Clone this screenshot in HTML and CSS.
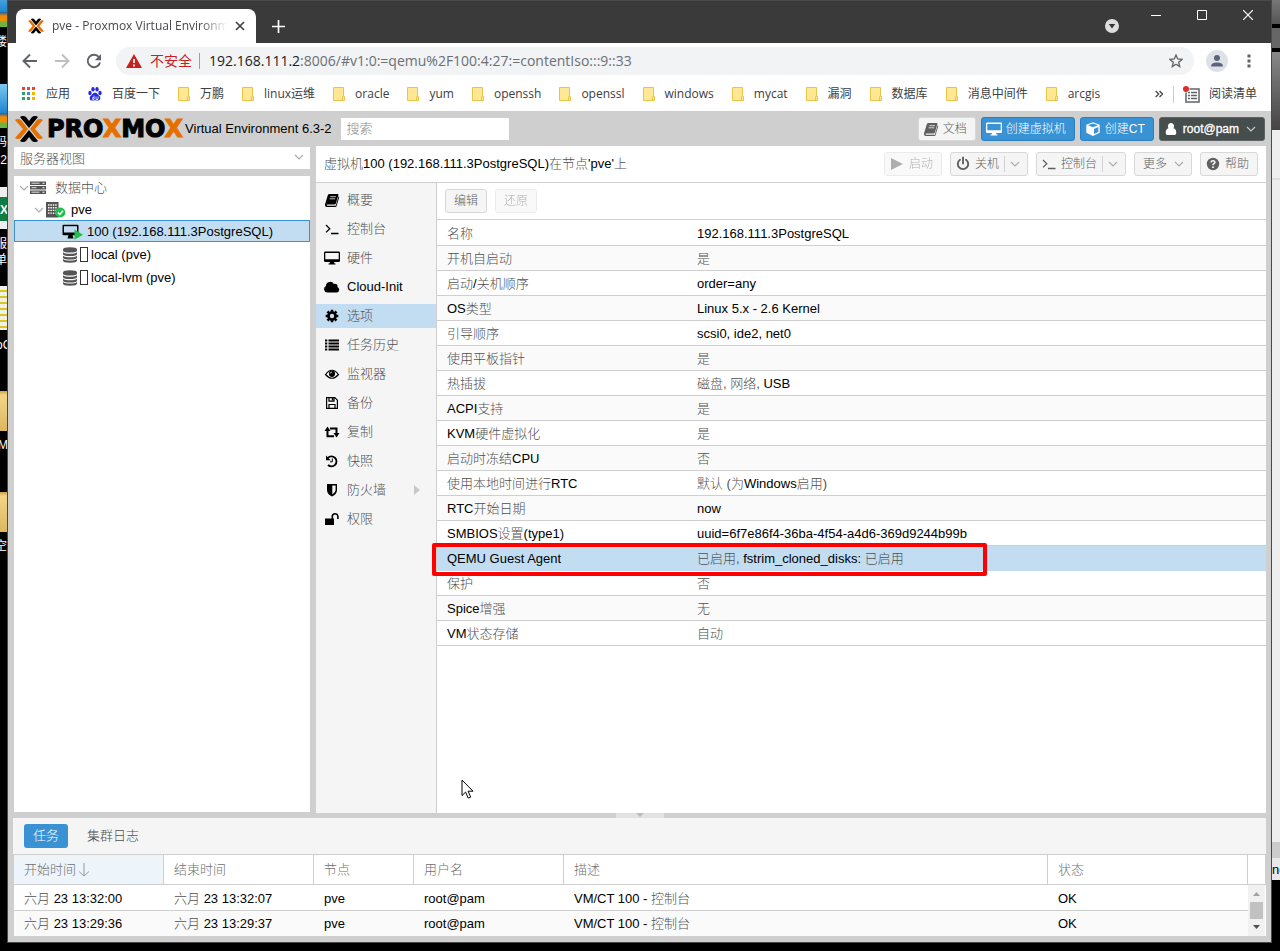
FILE: index.html
```html
<!DOCTYPE html>
<html lang="zh-CN">
<head>
  <meta charset="UTF-8" />
  <meta name="viewport" content="width=device-width, initial-scale=1.0" />
  <title>pve - Proxmox Virtual Environment</title>
  <link rel="stylesheet" href="styles.css">
</head>
<body>
  <!-- icon sprite -->
  <svg class="sprite" aria-hidden="true">
    <symbol id="i-logo" viewBox="0 0 28 26">
      <path fill="#000" d="M5 1Q6 0 8 0Q10 0 11 1L14 5L17 1Q18 0 20 0Q22 0 23 1L14 12ZM5 25Q6 26 8 26Q10 26 11 25L14 21L17 25Q18 26 20 26Q22 26 23 25L14 14Z"/>
      <path fill="#e57000" d="M0 4Q1 3 3 3Q5 3 6 4L13 13L6 22Q5 23 3 23Q1 23 0 22L8 13ZM28 4Q27 3 25 3Q23 3 22 4L15 13L22 22Q23 23 25 23Q27 23 28 22L20 13Z"/>
    </symbol>
    <symbol id="i-folder" viewBox="0 0 12 14"><path d="M.5 .5h10v9h1v4H.5z" fill="#ffe793" stroke="#e8c54a"/><path d="M9.500 9.500v4" stroke="#e8c54a"/></symbol>
    <symbol id="i-book" viewBox="0 0 16 16"><path d="M5.500 2h8.200q1 0 .7 1l-2.500 8.500q-.3 1-1.400 1H3.300q-.9 0-.7.6.1.700 1 .7h8.200l2.800-9.500q.8.500.500 1.400l-2.500 8.400q-.3 1-1.300 1H3q-1.500 0-1.900-1.300-.3-1 .100-2L3.800 3.300Q4.200 2 5.500 2z" fill="currentColor"/><path d="M6.300 4.700h5.600M5.600 6.800h5.600" stroke="#f5f5f5" stroke-width=".8"/></symbol>
    <symbol id="i-terminal" viewBox="0 0 16 16"><path d="M2 4l3.800 3.700L2 11.400M7 12.500h7.500" fill="none" stroke="currentColor" stroke-width="1.300"/></symbol>
    <symbol id="i-desktop" viewBox="0 0 16 16"><path fill="currentColor" fill-rule="evenodd" d="M1.200 1.500h13.600q1.200 0 1.200 1.200v8.100q0 1.200-1.200 1.200H10l.5 1.500h1v1h-7v-1h1L6 12H1.200Q0 12 0 10.800V2.700Q0 1.500 1.200 1.500zM1.300 3v6.300h13.400V3z"/></symbol>
    <symbol id="i-cloud" viewBox="0 0 16 16"><path fill="currentColor" d="M3.500 13.500A3.400 3.400 0 0 1 1.900 7.100 4.300 4.300 0 0 1 9.900 5a2.500 2.500 0 0 1 3.500 3 2.900 2.900 0 0 1-.4 5.500z"/></symbol>
    <symbol id="i-gear" viewBox="0 0 16 16"><circle cx="8" cy="8" r="3.500" fill="none" stroke="currentColor" stroke-width="2.600"/><path d="M8 1.700v2.500M8 11.800v2.500M1.700 8h2.500M11.800 8h2.500M3.500 3.500l1.700 1.700M10.800 10.800l1.700 1.700M3.500 12.500l1.700-1.700M10.800 5.200l1.700-1.700" stroke="currentColor" stroke-width="2.500"/></symbol>
    <symbol id="i-list" viewBox="0 0 16 16"><path d="M1 3.500h2.300M4.500 3.500H15M1 6.500h2.300M4.500 6.500H15M1 9.500h2.300M4.500 9.500H15M1 12.500h2.300M4.500 12.500H15" stroke="currentColor" stroke-width="1.900"/></symbol>
    <symbol id="i-eye" viewBox="0 0 16 16"><path d="M1.500 8.500Q8 0 14.500 8.500 8 16 1.500 8.500z" fill="none" stroke="currentColor" stroke-width="1.200"/><circle cx="8" cy="7.800" r="3.100" fill="currentColor"/><path d="M6.200 7.600Q6.400 6 8 6" stroke="#f5f5f5" fill="none" stroke-width=".8"/></symbol>
    <symbol id="i-save" viewBox="0 0 16 16"><path d="M2.600 2.600h8.200L13.400 5.200v8.200H2.600zM5 2.600v3.600h5V2.600M5 13.400V9.500h6v3.900" fill="none" stroke="currentColor" stroke-width="1.200"/><path d="M7.800 3h1.500v2.500H7.800z" fill="currentColor"/></symbol>
    <symbol id="i-retweet" viewBox="0 0 16 16"><path d="M3.500 6v6.200H10M6 4.500h6.500V10" fill="none" stroke="currentColor" stroke-width="2"/><path d="M3.500 2.500L.5 7h6zM12.500 13.500l3-4.500h-6z" fill="currentColor"/></symbol>
    <symbol id="i-history" viewBox="0 0 16 16"><path d="M3.800 5A5 5 0 1 1 4 12" fill="none" stroke="currentColor" stroke-width="1.800"/><path d="M2 2.500v4.700h4.700z" fill="currentColor"/><path d="M8.300 5.500v3.300H6" fill="none" stroke="currentColor"/></symbol>
    <symbol id="i-shield" viewBox="0 0 16 16"><path d="M3 2h10v6q0 4-5 6.500Q3 12 3 8z" fill="currentColor"/><path d="M8.300 3.500h3.300V8q0 2.500-3.300 4.500z" fill="#f5f5f5"/></symbol>
    <symbol id="i-unlock" viewBox="0 0 16 16"><path d="M1 7.500h9V14H1z" fill="currentColor"/><path d="M8.300 8V5.500a2.800 2.800 0 0 1 5.600 0V8" fill="none" stroke="currentColor" stroke-width="1.600"/></symbol>
    <symbol id="i-play" viewBox="0 0 16 16"><path d="M2 2l12 6L2 14z" fill="currentColor"/></symbol>
    <symbol id="i-power" viewBox="0 0 16 16"><path d="M5 3.700a5.200 5.200 0 1 0 6 0" fill="none" stroke="currentColor" stroke-width="1.900" stroke-linecap="round"/><path d="M8 1.500v6" stroke="currentColor" stroke-width="1.900" stroke-linecap="round"/></symbol>
    <symbol id="i-help" viewBox="0 0 16 16"><circle cx="8" cy="8" r="6.200" fill="currentColor"/><path d="M6 6.300Q6.200 4.700 8 4.700t1.900 1.500q0 .9-1 1.400T8 9.300" fill="none" stroke="#f5f5f5" stroke-width="1.600"/><path d="M7.100 10.500h1.800v1.600H7.100z" fill="#f5f5f5"/></symbol>
    <symbol id="i-cube" viewBox="0 0 16 16"><path d="M8 1.300l6.700 2.500v8L8 15l-6.700-3.200v-8z" fill="currentColor"/><path d="M3 4.300L8 2.500l5 1.800-5 2zM9 8l4.300-1.900v4.800L9 13z" fill="#3892d4"/></symbol>
    <symbol id="i-user" viewBox="0 0 16 16"><path d="M8 2a3 3.300 0 0 1 2.500 5.300q2.800.7 2.800 4.700 0 2-1.800 2h-7q-1.800 0-1.800-2 0-4 2.800-4.700A3 3.300 0 0 1 8 2z" fill="currentColor"/></symbol>
    <symbol id="i-chevron" viewBox="0 0 10 10"><path d="M1 3l4 4 4-4" fill="none" stroke="currentColor" stroke-width="1.100"/></symbol>
    <symbol id="i-server" viewBox="0 0 16 14"><path d="M0 .5h16v3.500H0zM0 5h16v3.500H0zM0 9.500h16V13H0z" fill="#555"/><path d="M1.500 2.200h8M1.500 6.700h5M1.500 11.200h8" stroke="#ddd"/><path d="M12.500 1.700h2v1h-2zM12.500 6.200h2v1h-2zM12.500 10.700h2v1h-2z" fill="#fff"/></symbol>
    <symbol id="i-node" viewBox="0 0 20 16"><path d="M0 0h12.500v15.500H0z" fill="#555"/><path d="M2 3h9M2 5.700h9M2 8.400h9M2 11.100h9" stroke="#fff" stroke-width="1.400" stroke-dasharray="1.500 .9"/><circle cx="14.300" cy="10.500" r="5" fill="#21bf4b"/><path d="M11.800 10.500l2 2 3.200-3.700" fill="none" stroke="#fff" stroke-width="1.500"/></symbol>
    <symbol id="i-vm" viewBox="0 0 22 16"><path d="M1.500 .8h14q1 0 1 1v8.500q0 1-1 1h-14q-1 0-1-1V1.800q0-1 1-1z" fill="#000"/><path d="M2 2.200h13v6.300H2z" fill="#c2ddf2"/><path d="M6.500 11h4l1 3.500h-6z" fill="#000"/><path d="M12.500 5.500L21 10.700l-8.500 5z" fill="#21bf4b"/></symbol>
    <symbol id="i-db" viewBox="0 0 14 16"><path d="M0 2.500Q0 .3 7 .3t7 2.200v.9q0 2.100-7 2.100T0 3.400zM0 5.200Q2 6.700 7 6.700t7-1.500v1.800q0 2-7 2T0 7zM0 8.700q2 1.500 7 1.500t7-1.500v1.800q0 2-7 2t-7-2zM0 12.100q2 1.500 7 1.500t7-1.500v1.500q0 2.200-7 2.200t-7-2.200z" fill="#555"/></symbol>
  </svg>

  <!-- desktop peeking out behind the window -->
  <div class="desktop-left" aria-hidden="true">
    <div class="app-icon first"></div>
    <span class="d-text t1">楼</span>
    <div class="app-icon second"></div>
    <span class="d-text t2">码</span>
    <span class="d-text t3">-2</span>
    <div class="excel">X</div>
    <span class="d-text t4">服</span>
    <span class="d-text t5">单</span>
    <div class="doc"></div>
    <span class="d-text t6">oC</span>
    <div class="dir d1"></div>
    <span class="d-text t7">M</span>
    <div class="dir d2"></div>
    <span class="d-text t8">空</span>
  </div>
  <div class="desktop-right" aria-hidden="true">
    <div class="back-window"><span>no</span></div>
  </div>

  <div class="window">
    <div class="tabbar">
      <div class="tab">
        <svg class="favicon"><use href="#i-logo"/></svg>
        <span class="tab-title">pve - Proxmox Virtual Environment</span>
        <button class="plain" aria-label="关闭标签页"><svg width="10" height="10"><path d="M1 1l8 8M9 1l-8 8" stroke="#444" stroke-width="1.700"/></svg></button>
      </div>
      <button class="plain new-tab" aria-label="新标签页"><svg width="13" height="13"><path d="M6.500 0v13M0 6.500h13" stroke="#fff" stroke-width="1.700"/></svg></button>
      <button class="plain tab-search" aria-label="搜索标签页"><svg width="14" height="14"><circle cx="7" cy="7" r="7" fill="#ddd"/><path d="M3.800 5h6.400L7 9.500z" fill="#333"/></svg></button>
      <div class="controls">
        <button class="plain" aria-label="最小化"><svg width="10" height="10"><path d="M0 5.500h10" stroke="#fff"/></svg></button>
        <button class="plain" aria-label="最大化"><svg width="10" height="10"><path d="M.5 .5h9v9h-9z" stroke="#fff" fill="none"/></svg></button>
        <button class="plain" aria-label="关闭"><svg width="10" height="10"><path d="M0 0l10 10M10 0L0 10" stroke="#fff" stroke-width="1.200"/></svg></button>
      </div>
    </div>

    <div class="toolbar">
      <button class="plain" aria-label="后退"><svg width="16" height="16"><path d="M15 8H2M8 1.500L1.500 8 8 14.500" fill="none" stroke="#5f6368" stroke-width="1.900"/></svg></button>
      <button class="plain" aria-label="前进"><svg width="16" height="16"><path d="M1 8h13M8 1.500L14.500 8 8 14.500" fill="none" stroke="#bcbec1" stroke-width="1.900"/></svg></button>
      <button class="plain" aria-label="刷新"><svg width="16" height="16"><path d="M13 4.300A6.200 6.200 0 1 0 14 9.500" fill="none" stroke="#5f6368" stroke-width="1.900"/><path d="M15 1v6.200H8.800z" fill="#5f6368"/></svg></button>
      <div class="address">
        <svg width="16" height="14"><path d="M8 0l8 14H0z" fill="#c5221f"/><path d="M8 5v4M8 10.500v2" stroke="#fff" stroke-width="1.700"/></svg>
        <span class="insecure">不安全</span>
        <span class="url"><b>192.168.111.2</b>:8006/#v1:0:=qemu%2F100:4:27:=contentIso:::9::33</span>
        <button class="plain" aria-label="收藏"><svg width="14" height="14"><path d="M7 1l1.700 4 4.300.4-3.300 2.800 1 4.300L7 10.200l-3.700 2.300 1-4.300L1 5.400 5.300 5z" fill="none" stroke="#5f6368" stroke-width="1.300"/></svg></button>
      </div>
      <button class="plain profile" aria-label="用户"><svg width="22" height="22"><circle cx="11" cy="11" r="11" fill="#dee1e6"/><circle cx="11" cy="8" r="3" fill="#5a6478"/><path d="M5 16.500q0-4 6-4t6 4z" fill="#5a6478"/></svg></button>
      <button class="plain menu" aria-label="菜单"><svg width="4" height="14"><path d="M.5 .5h3v3h-3zM.5 5.500h3v3h-3zM.5 10.500h3v3h-3z" fill="#5f6368"/></svg></button>
    </div>

    <nav class="bookmarks">
      <a href="#"><svg width="14" height="14"><path d="M0 0h3v3H0zM5 0h3v3H5zM10 0h3v3h-3z" fill="#ea4335"/><path d="M0 5h3v3H0zM0 10h3v3H0zM5 10h3v3H5z" fill="#34a065"/><path d="M5 5h3v3H5z" fill="#4285f4"/><path d="M10 5h3v3h-3zM10 10h3v3h-3z" fill="#f5b400"/></svg>应用</a>
      <a href="#"><svg width="14" height="14"><g fill="#2529d8"><ellipse cx="2" cy="6" rx="1.700" ry="2.200"/><ellipse cx="5" cy="2.300" rx="1.700" ry="2.300"/><ellipse cx="9" cy="2.300" rx="1.700" ry="2.300"/><ellipse cx="12" cy="6" rx="1.700" ry="2.200"/><path d="M7 5.500q2 0 3.300 2.500 2.700 1.700 2 4-.8 2-3.300 1.500-2-.4-4 0Q2.500 14 1.700 12q-.7-2.300 2-4Q5 5.500 7 5.500z"/></g><path d="M6 8.500v4H4.700v-2H6M8 9.500v3h2v-3" fill="none" stroke="#fff" stroke-width=".8"/></svg>百度一下</a>
      <a href="#"><svg class="folder"><use href="#i-folder"/></svg>万鹏</a>
      <a href="#"><svg class="folder"><use href="#i-folder"/></svg>linux运维</a>
      <a href="#"><svg class="folder"><use href="#i-folder"/></svg>oracle</a>
      <a href="#"><svg class="folder"><use href="#i-folder"/></svg>yum</a>
      <a href="#"><svg class="folder"><use href="#i-folder"/></svg>openssh</a>
      <a href="#"><svg class="folder"><use href="#i-folder"/></svg>openssl</a>
      <a href="#"><svg class="folder"><use href="#i-folder"/></svg>windows</a>
      <a href="#"><svg class="folder"><use href="#i-folder"/></svg>mycat</a>
      <a href="#"><svg class="folder"><use href="#i-folder"/></svg>漏洞</a>
      <a href="#"><svg class="folder"><use href="#i-folder"/></svg>数据库</a>
      <a href="#"><svg class="folder"><use href="#i-folder"/></svg>消息中间件</a>
      <a href="#"><svg class="folder"><use href="#i-folder"/></svg>arcgis</a>
      <div class="bookmarks-end">
        <button class="plain" aria-label="更多书签"><svg width="8" height="8"><path d="M.7 1l3 3-3 3M4.500 1l3 3-3 3" fill="none" stroke="#444" stroke-width="1.300"/></svg></button>
        <a class="reading" href="#"><svg width="17" height="17"><path d="M3 3h13v13H3z" fill="none" stroke="#5f6368" stroke-width="1.500"/><path d="M5 6.500h2M8 6.500h6M5 9.500h2M8 9.500h6M5 12.500h2M8 12.500h6" stroke="#5f6368" stroke-width="1.400"/><circle cx="3" cy="3" r="3.500" fill="#fff"/><circle cx="3" cy="3" r="3" fill="#d93025"/></svg>阅读清单</a>
      </div>
    </nav>

    <div class="page">
      <header class="header">
        <svg class="logo"><use href="#i-logo"/></svg>
        <span class="wordmark">PRO<i>X</i>MO<i>X</i></span>
        <span class="version">Virtual Environment 6.3-2</span>
        <input class="search" type="text" placeholder="搜索" aria-label="搜索">
        <div class="header-buttons">
          <button class="btn"><svg class="icon"><use href="#i-book"/></svg>文档</button>
          <button class="btn primary"><svg class="icon"><use href="#i-desktop"/></svg>创建虚拟机</button>
          <button class="btn primary"><svg class="icon"><use href="#i-cube"/></svg>创建CT</button>
          <button class="btn user"><svg class="icon"><use href="#i-user"/></svg>root@pam<svg class="chev"><use href="#i-chevron"/></svg></button>
        </div>
      </header>

      <div class="main">
        <aside class="left">
          <div class="view-select">
            <select aria-label="视图"><option>服务器视图</option></select>
            <svg class="chev"><use href="#i-chevron"/></svg>
          </div>
          <ul class="tree">
            <li><svg class="chev"><use href="#i-chevron"/></svg><svg class="t-server"><use href="#i-server"/></svg><span class="zh">数据中心</span></li>
            <li class="level1"><svg class="chev"><use href="#i-chevron"/></svg><svg class="t-node"><use href="#i-node"/></svg>pve</li>
            <li class="level2 selected"><svg class="t-vm"><use href="#i-vm"/></svg>100 (192.168.111.3PostgreSQL)</li>
            <li class="level2 storage"><svg class="t-db"><use href="#i-db"/></svg><span class="box"></span>local (pve)</li>
            <li class="level2 storage"><svg class="t-db"><use href="#i-db"/></svg><span class="box"></span>local-lvm (pve)</li>
          </ul>
        </aside>

        <section class="content">
          <div class="title">
            <h1><span class="zh">虚拟机</span>100 (192.168.111.3PostgreSQL)<span class="zh">在节点</span>'pve'<span class="zh">上</span></h1>
            <div class="actions">
              <button class="btn" disabled><svg class="icon"><use href="#i-play"/></svg>启动</button>
              <button class="btn split"><svg class="icon"><use href="#i-power"/></svg>关机<span class="arrow"><svg class="chev"><use href="#i-chevron"/></svg></span></button>
              <button class="btn split"><svg class="icon"><use href="#i-terminal"/></svg>控制台<span class="arrow"><svg class="chev"><use href="#i-chevron"/></svg></span></button>
              <button class="btn more">更多<svg class="chev"><use href="#i-chevron"/></svg></button>
              <button class="btn"><svg class="icon"><use href="#i-help"/></svg>帮助</button>
            </div>
          </div>

          <div class="panel">
            <nav class="side">
              <a href="#"><svg class="icon"><use href="#i-book"/></svg><span class="zh">概要</span></a>
              <a href="#"><svg class="icon"><use href="#i-terminal"/></svg><span class="zh">控制台</span></a>
              <a href="#"><svg class="icon"><use href="#i-desktop"/></svg><span class="zh">硬件</span></a>
              <a href="#"><svg class="icon"><use href="#i-cloud"/></svg>Cloud-Init</a>
              <a href="#" class="active"><svg class="icon"><use href="#i-gear"/></svg><span class="zh">选项</span></a>
              <a href="#"><svg class="icon"><use href="#i-list"/></svg><span class="zh">任务历史</span></a>
              <a href="#"><svg class="icon"><use href="#i-eye"/></svg><span class="zh">监视器</span></a>
              <a href="#"><svg class="icon"><use href="#i-save"/></svg><span class="zh">备份</span></a>
              <a href="#"><svg class="icon"><use href="#i-retweet"/></svg><span class="zh">复制</span></a>
              <a href="#"><svg class="icon"><use href="#i-history"/></svg><span class="zh">快照</span></a>
              <a href="#" class="has-sub"><svg class="icon"><use href="#i-shield"/></svg><span class="zh">防火墙</span></a>
              <a href="#"><svg class="icon"><use href="#i-unlock"/></svg><span class="zh">权限</span></a>
            </nav>

            <div class="options">
              <div class="options-bar">
                <button class="btn text-only">编辑</button>
                <button class="btn text-only" disabled>还原</button>
              </div>
              <table class="options-table">
                <tr><td class="zh">名称</td><td>192.168.111.3PostgreSQL</td></tr>
                <tr><td class="zh">开机自启动</td><td class="zh">是</td></tr>
                <tr><td><span class="zh">启动</span>/<span class="zh">关机顺序</span></td><td>order=any</td></tr>
                <tr><td>OS<span class="zh">类型</span></td><td>Linux 5.x - 2.6 Kernel</td></tr>
                <tr><td class="zh">引导顺序</td><td>scsi0, ide2, net0</td></tr>
                <tr><td class="zh">使用平板指针</td><td class="zh">是</td></tr>
                <tr><td class="zh">热插拔</td><td><span class="zh">磁盘, 网络, </span>USB</td></tr>
                <tr><td>ACPI<span class="zh">支持</span></td><td class="zh">是</td></tr>
                <tr><td>KVM<span class="zh">硬件虚拟化</span></td><td class="zh">是</td></tr>
                <tr><td><span class="zh">启动时冻结</span>CPU</td><td class="zh">否</td></tr>
                <tr><td><span class="zh">使用本地时间进行</span>RTC</td><td><span class="zh">默认 (为</span>Windows<span class="zh">启用)</span></td></tr>
                <tr><td>RTC<span class="zh">开始日期</span></td><td>now</td></tr>
                <tr><td>SMBIOS<span class="zh">设置</span>(type1)</td><td>uuid=6f7e86f4-36ba-4f54-a4d6-369d9244b99b</td></tr>
                <tr class="selected"><td>QEMU Guest Agent<span class="marker"></span></td><td><span class="zh">已启用, </span>fstrim_cloned_disks: <span class="zh">已启用</span></td></tr>
                <tr><td class="zh">保护</td><td class="zh">否</td></tr>
                <tr><td>Spice<span class="zh">增强</span></td><td class="zh">无</td></tr>
                <tr><td>VM<span class="zh">状态存储</span></td><td class="zh">自动</td></tr>
              </table>
            </div>
          </div>
        </section>
      </div>

      <div class="splitter"><span><svg width="10" height="4"><path d="M1 0h8L5 4z" fill="#bbb"/></svg></span></div>

      <section class="log">
        <div class="log-tabs">
          <button class="log-tab active">任务</button>
          <button class="log-tab">集群日志</button>
        </div>
        <table class="log-table">
          <colgroup><col class="c-time"><col class="c-time"><col class="c-node"><col class="c-time"><col><col class="c-status"><col class="c-scroll"></colgroup>
          <thead>
            <tr><th class="sorted">开始时间<svg width="12" height="14"><path d="M6 0v13M1 8.500l5 4.500 5-4.500" fill="none" stroke="#999"/></svg></th><th>结束时间</th><th>节点</th><th>用户名</th><th>描述</th><th>状态</th><th></th></tr>
          </thead>
          <tbody>
            <tr><td><span class="zh">六月</span> 23 13:32:00</td><td><span class="zh">六月</span> 23 13:32:07</td><td>pve</td><td>root@pam</td><td>VM/CT 100 - <span class="zh">控制台</span></td><td>OK</td>
              <td class="scroll" rowspan="2"><div class="scrollbar"><svg width="7" height="4"><path d="M0 4l3.500-4L7 4z" fill="#a3a3a3"/></svg><i></i><svg width="7" height="4"><path d="M0 0l3.500 4L7 0z" fill="#505050"/></svg></div></td></tr>
            <tr><td><span class="zh">六月</span> 23 13:29:36</td><td><span class="zh">六月</span> 23 13:29:37</td><td>pve</td><td>root@pam</td><td>VM/CT 100 - <span class="zh">控制台</span></td><td>OK</td></tr>
          </tbody>
        </table>
      </section>
    </div>
  </div>

  <svg class="cursor" width="13" height="20" aria-hidden="true"><path d="M1 1v15.500l3.600-3.400 2.600 6 2.500-1-2.600-5.900H12z" fill="#fff" stroke="#000"/></svg>
</body>
</html>
```
FILE: styles.css
```css
* {
  box-sizing: border-box;
}
body {
  margin: 0;
  padding: 0 8px 8px 7px;
  height: 100vh;
  background: #000;
  font-family: "Liberation Sans", Arial, "Noto Sans CJK SC", sans-serif;
  font-size: 13px;
  font-weight: 300;
  line-height: 16px;
  color: #000;
  position: relative;
  overflow: hidden;
}
button, input, select {
  font: inherit;
}
a {
  color: inherit;
  text-decoration: none;
}
.sprite {
  position: absolute;
  width: 0;
  height: 0;
}
.zh {
  color: #505050;
}
.plain {
  display: flex;
  align-items: center;
  justify-content: center;
  padding: 0;
  border: 0;
  background: none;
}

/* desktop */
.desktop-left {
  position: absolute;
  left: 0;
  top: 0;
  width: 7px;
  height: 100%;
  overflow: hidden;
  font-size: 12px;
  font-weight: 400;
  color: #fff;
}
.desktop-left > * {
  position: absolute;
  right: 0;
}
.app-icon {
  width: 7px;
  height: 44px;
  background: linear-gradient(#7cc8f0, #1f86d0 65%, #1560a8 66%, #f08c00 75%, #f08c00 87%, #6db33f 88%);
}
.first { top: -17px; }
.second { top: 84px; }
.t1 { top: 34px; }
.t2 { top: 134px; }
.t3 { top: 152px; }
.t4 { top: 236px; }
.t5 { top: 252px; }
.t6 { top: 337px; left: -4px; }
.t7 { top: 437px; left: -2px; }
.t8 { top: 538px; }
.excel {
  top: 187px;
  width: 7px;
  height: 42px;
  padding-top: 12px;
  border: solid #eee;
  border-width: 10px 0 8px;
  background: #107c41;
  font-weight: 700;
  line-height: 2px;
}
.doc {
  top: 286px;
  width: 7px;
  height: 44px;
  background: repeating-linear-gradient(#f0f0e8 0 4px, #d8c81c 4px 6px);
}
.dir {
  width: 7px;
  height: 40px;
  background: linear-gradient(#c9a24a, #f2d585 10%, #dcb760);
}
.d1 { top: 391px; }
.d2 { top: 492px; }
.desktop-right {
  position: absolute;
  right: 0;
  top: 0;
  width: 8px;
  height: 880px;
  padding-top: 130px;
  background: linear-gradient(#777, #555 24px, #000 24px, #000 28px, #666 28px, #666 48px, #000 48px, #000 52px, #888 52px, #444 130px);
}
.back-window {
  height: 750px;
  overflow: hidden;
  background: linear-gradient(#eee 48px, #ddd 48px, #ddd 50px, #eee 50px, #eee 712px, #ccc 712px, #ccc 728px, #e8e8e8 728px);
  padding-top: 732px;
}

/* browser window */
.window {
  height: 100%;
  display: flex;
  flex-direction: column;
  border: 1px solid #4a4a4a;
  background: #fff;
  position: relative;
}
.tabbar, .toolbar, .bookmarks {
  font-family: "Open Sans", "Noto Sans CJK SC", sans-serif;
  font-weight: 400;
  flex: none;
}
.tabbar {
  height: 42px;
  padding-left: 8px;
  display: flex;
  align-items: flex-end;
  background: #3a3a3a;
}
.tab {
  width: 240px;
  height: 34px;
  padding: 0 11px 0 12px;
  display: flex;
  align-items: center;
  border-radius: 8px 8px 0 0;
  background: #fff;
}
.favicon {
  width: 16px;
  height: 16px;
}
.tab-title {
  flex: 1;
  margin: 0 8px;
  overflow: hidden;
  white-space: nowrap;
  font-size: 12px;
  color: #45484c;
  -webkit-mask-image: linear-gradient(to right, #000 85%, transparent);
  mask-image: linear-gradient(to right, #000 85%, transparent);
}
.new-tab {
  width: 44px;
  height: 34px;
}
.tab-search {
  margin: 0 14px 0 auto;
  height: 34px;
}
.controls {
  display: flex;
  align-self: flex-start;
}
.controls .plain {
  width: 46px;
  height: 28px;
}
.toolbar {
  height: 36px;
  padding: 0 20px 0 14px;
  display: flex;
  align-items: center;
  gap: 16px;
}
.address {
  flex: 1;
  height: 28px;
  margin-left: -2px;
  padding: 0 11px 0 10px;
  display: flex;
  align-items: center;
  border-radius: 14px;
  background: #f1f3f4;
  font-size: 14px;
}
.insecure {
  margin-left: 8px;
  padding-right: 7px;
  border-right: 1px solid #9aa0a6;
  color: #c5221f;
}
.url {
  flex: 1;
  margin-left: 9px;
  color: #6b6f74;
}
.url b {
  font-weight: 400;
  color: #202124;
}
.profile {
  margin-left: -4px;
}
.menu {
  margin-left: 3px;
}
.bookmarks {
  height: 32px;
  padding: 0 14px 2px 14px;
  display: flex;
  align-items: center;
  gap: 18px;
  font-size: 12px;
  color: #3c4043;
}
.bookmarks a {
  display: flex;
  align-items: center;
  gap: 10px;
  white-space: nowrap;
}
.folder {
  width: 12px;
  height: 14px;
}
.bookmarks-end {
  margin-left: auto;
  display: flex;
  align-items: center;
  gap: 10px;
}
.bookmarks .reading {
  padding-left: 9px;
  gap: 9px;
  border-left: 1px solid #ccc;
}

/* proxmox page */
.page {
  flex: 1;
  min-height: 0;
  display: flex;
  flex-direction: column;
  padding: 0 5px 6px;
  background: #cfcfcf;
}
.header {
  height: 35px;
  padding: 0 1px 0 2px;
  display: flex;
  align-items: center;
  flex: none;
}
.logo {
  width: 28px;
  height: 26px;
}
.wordmark {
  margin-left: 4px;
  font-family: "DejaVu Sans", sans-serif;
  font-size: 24px;
  font-weight: 700;
  line-height: 24px;
  -webkit-text-stroke: 1px;
}
.wordmark i {
  font-style: normal;
  color: #e57000;
}
.version {
  margin: 0 9px 0 2px;
}
.search {
  width: 168px;
  height: 22px;
  padding: 0 6px;
  border: 0;
  background: #fff;
}
.search::placeholder {
  color: #888;
}
.header-buttons {
  margin-left: auto;
  display: flex;
  gap: 5px;
}
.btn {
  height: 24px;
  padding: 0 8px 0 4px;
  display: flex;
  align-items: center;
  border: 1px solid #d8d8d8;
  border-radius: 3px;
  background: #f5f5f5;
  font-size: 12px;
  color: #606060;
  white-space: nowrap;
}
.btn .icon {
  margin-right: 4px;
}
.btn:disabled {
  opacity: .5;
}
.icon {
  width: 16px;
  height: 16px;
  flex: none;
}
.chev {
  width: 10px;
  height: 10px;
  flex: none;
  color: #aaa;
}
.primary {
  border-color: #2a7fc0;
  background: #3892d4;
  color: #fff;
}
.user {
  border-color: #5c6363;
  background: #464d4d;
  color: #fff;
  padding: 0 8px 0 3px;
  -webkit-text-stroke: .3px #fff;
}
.user .chev {
  margin-left: 7px;
  color: #ccc;
}
.split {
  padding-right: 0;
}
.arrow {
  height: 16px;
  width: 23px;
  margin-left: 5px;
  padding-left: 5px;
  display: flex;
  align-items: center;
  border-left: 1px solid #d0d0d0;
}
.more {
  padding-left: 8px;
  padding-right: 7px;
}
.more .chev {
  margin-left: 7px;
}
.text-only {
  padding: 0 8px;
}
.main {
  flex: 1;
  min-height: 0;
  display: flex;
  gap: 6px;
}
.left {
  width: 297px;
  padding: 1px 0 1px 1px;
  display: flex;
  flex-direction: column;
  gap: 7px;
}
.view-select {
  position: relative;
}
.view-select select {
  display: block;
  width: 100%;
  height: 22px;
  padding: 1px 6px 0;
  border: 0;
  border-radius: 0;
  appearance: none;
  background: #fff;
  color: #555;
}
.view-select .chev {
  position: absolute;
  right: 6px;
  top: 5px;
}
.tree {
  flex: 1;
  margin: 0;
  padding: 0;
  list-style: none;
  background: #fff;
}
.tree li {
  height: 22px;
  padding-top: 2px;
  padding-left: 5px;
  display: flex;
  align-items: center;
}
.tree .level1 {
  padding-left: 20px;
}
.tree .level2 {
  padding-left: 48px;
}
.tree .selected {
  padding-left: 47px;
  border: 1px solid #3892d4;
  background: #c2ddf2;
}
.tree .storage {
  height: 23px;
}
.t-server {
  width: 16px;
  height: 14px;
  margin: 0 9px 0 1px;
}
.t-node {
  width: 20px;
  height: 16px;
  margin: 0 5px 0 2px;
}
.t-vm {
  width: 22px;
  height: 16px;
  margin-right: 3px;
}
.t-db {
  width: 14px;
  height: 16px;
  margin: 0 3px 0 1px;
}
.box {
  width: 8px;
  height: 15px;
  margin-right: 3px;
  border: 1px solid #333;
}
.content {
  flex: 1;
  min-width: 0;
  display: flex;
  flex-direction: column;
  background: #fff;
}
.title {
  height: 37px;
  padding: 0 8px;
  display: flex;
  align-items: center;
  justify-content: space-between;
  border-bottom: 1px solid #cfcfcf;
  flex: none;
}
.title h1 {
  margin: 0;
  font-size: 13px;
  font-weight: 300;
}
.actions {
  display: flex;
  gap: 8px;
}
.panel {
  flex: 1;
  display: flex;
}
.side {
  width: 121px;
  padding: 5px 0;
  display: flex;
  flex-direction: column;
  gap: 5px;
  border-right: 1px solid #cfcfcf;
  background: #f5f5f5;
}
.side a {
  height: 24px;
  padding: 0 16px 0 8px;
  display: flex;
  align-items: center;
  gap: 7px;
}
.side .active {
  background: #c2ddf2;
}
.has-sub::after {
  content: "";
  margin-left: auto;
  border: 5px solid transparent;
  border-left: 6px solid #c8c8c8;
  border-right: 0;
}
.options {
  flex: 1;
}
.options-bar {
  height: 37px;
  padding: 0 8px;
  display: flex;
  align-items: center;
  gap: 8px;
  border-bottom: 1px solid #cfcfcf;
}
.options-table, .log-table {
  width: 100%;
  border-spacing: 0;
  table-layout: fixed;
}
.options-table {
  margin-top: 1px;
}
.options-table td {
  height: 25px;
  padding: 2px 10px 0;
  border-bottom: 1px solid #cfcfcf;
  white-space: nowrap;
}
.options-table td:first-child {
  width: 250px;
  position: relative;
}
.options-table tr:nth-child(even) {
  background: #fafafa;
}
.options-table .selected td {
  background: #c2ddf2;
  border-color: #c2ddf2;
}
.marker {
  position: absolute;
  left: -5px;
  top: -3px;
  width: 555px;
  height: 33px;
  border: 4px solid #fe0000;
  border-radius: 2px;
  z-index: 1;
}
.splitter {
  height: 5px;
  display: flex;
  justify-content: center;
  flex: none;
}
.splitter span {
  width: 48px;
  background: #e2e2e2;
  line-height: 0;
  text-align: center;
}

/* task log */
.log {
  flex: none;
  background: #f5f5f5;
}
.log-tabs {
  height: 37px;
  padding: 0 11px;
  display: flex;
  align-items: center;
  gap: 10px;
  border-bottom: 1px solid #cfcfcf;
}
.log-tab {
  height: 24px;
  padding: 0 9px;
  border: 0;
  border-radius: 3px;
  background: none;
  color: #505050;
}
.log-tab.active {
  background: #3892d4;
  color: #fff;
}
.log-table {
  border-left: 1px solid #cfcfcf;
  background: #fff;
}
.c-time { width: 150px; }
.c-node { width: 100px; }
.c-status { width: 200px; }
.c-scroll { width: 18px; }
.log-table th {
  height: 30px;
  padding: 0 10px;
  border: solid #cfcfcf;
  border-width: 0 1px 1px 0;
  font-weight: 300;
  text-align: left;
  color: #707070;
}
.log-table th svg {
  margin-left: 2px;
  vertical-align: -3px;
}
.log-table .sorted {
  background: #edf5fb;
}
.log-table td {
  height: 26px;
  padding: 3px 10px 0;
  border-bottom: 1px solid #cfcfcf;
  white-space: nowrap;
}
.log-table tr:nth-child(even) td {
  height: 25px;
  padding-top: 1px;
  background: #fafafa;
  border-bottom: 0;
}
.log-table .scroll {
  padding: 0;
  border: 0;
}
.scrollbar {
  width: 17px;
  height: 51px;
  padding: 7px 0;
  display: flex;
  flex-direction: column;
  align-items: center;
  justify-content: space-between;
  background: #f1f1f1;
}
.scrollbar i {
  width: 13px;
  height: 17px;
  background: #c1c1c1;
}

.cursor {
  position: absolute;
  left: 461px;
  top: 779px;
}
```
